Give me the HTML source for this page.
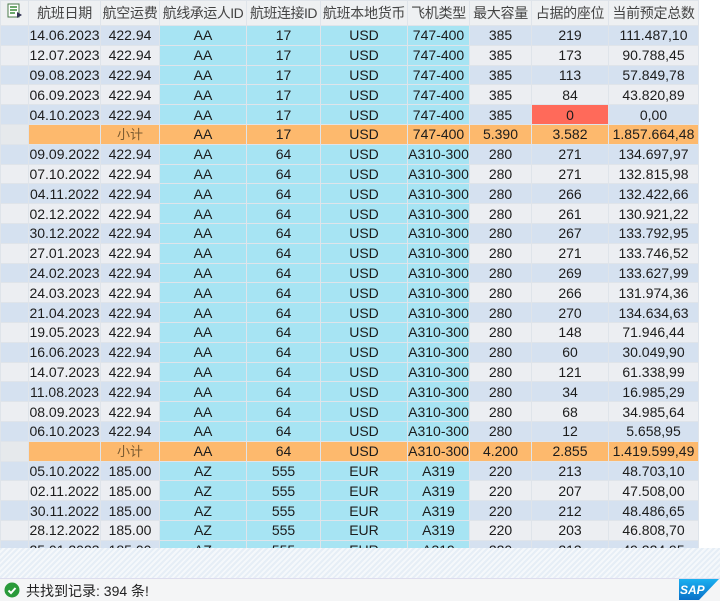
<!DOCTYPE html>
<html><head><meta charset="utf-8"><style>
body{margin:0;width:720px;height:600px;overflow:hidden;background:#f3f4f6;font-family:"Liberation Sans","Noto Sans CJK SC",sans-serif;}
#grid{position:absolute;left:0;top:0;width:720px;height:548px;overflow:hidden;background:#fff;}
table{border-collapse:collapse;table-layout:fixed;width:698px;font-size:14px;color:#1c1c1c;}
td,th{height:18.8px;line-height:18px;padding:0;border:1px solid #dfe4ea;text-align:center;white-space:nowrap;overflow:hidden;}
th{height:24px;font-weight:normal;background:#eef0f2;color:#444;font-size:14px;font-family:"Noto Sans CJK SC",sans-serif;letter-spacing:-0.3px;}
th.id{font-family:"Liberation Sans","Noto Sans CJK SC",sans-serif;letter-spacing:-0.5px;}
td.rh{background:#e6e9ec;}
tr.e td{background:#d5e1f0;}
tr.o td{background:#eceef2;}
tr td.c{background:#a7e4f3;}
tr.s td{background:#fdb96d;}
tr.s td.rh{background:#e6e9ec;}
td.red{background:#ff6a5a!important;}
.sub{color:#7a5a30;font-family:"Noto Sans CJK SC",sans-serif;font-size:13px;}
#hatch{position:absolute;left:0;top:548px;width:720px;height:30px;background:repeating-linear-gradient(135deg,#e6eef6 0 2px,#f5f8fb 2px 4px);}
#status{position:absolute;left:0;top:578px;width:720px;height:22px;background:#f4f5f6;border-top:1px solid #dde;font-size:14px;color:#222;}
</style></head><body>
<div id="grid"><table>
<colgroup><col style="width:28px"><col style="width:72px"><col style="width:59px"><col style="width:87px"><col style="width:74px"><col style="width:87px"><col style="width:62px"><col style="width:62px"><col style="width:77px"><col style="width:90px"></colgroup>
<tr><th><svg width="16" height="16" viewBox="0 0 16 16"><rect x="1" y="1" width="11" height="13" fill="#fff" stroke="#4a7a4a"/><path d="M3 4h7M3 7h7M3 10h5" stroke="#3a8a3a" stroke-width="1.5"/><path d="M10 9l5 3-5 3z" fill="#335"/></svg></th><th>航班日期</th><th>航空运费</th><th class="id">航线承运人ID</th><th class="id">航班连接ID</th><th>航班本地货币</th><th>飞机类型</th><th>最大容量</th><th>占据的座位</th><th>当前预定总数</th></tr>
<tr class="e"><td class="rh"></td><td>14.06.2023</td><td>422.94</td><td class="c">AA</td><td class="c">17</td><td class="c">USD</td><td class="c">747-400</td><td>385</td><td>219</td><td>111.487,10</td></tr>
<tr class="o"><td class="rh"></td><td>12.07.2023</td><td>422.94</td><td class="c">AA</td><td class="c">17</td><td class="c">USD</td><td class="c">747-400</td><td>385</td><td>173</td><td>90.788,45</td></tr>
<tr class="e"><td class="rh"></td><td>09.08.2023</td><td>422.94</td><td class="c">AA</td><td class="c">17</td><td class="c">USD</td><td class="c">747-400</td><td>385</td><td>113</td><td>57.849,78</td></tr>
<tr class="o"><td class="rh"></td><td>06.09.2023</td><td>422.94</td><td class="c">AA</td><td class="c">17</td><td class="c">USD</td><td class="c">747-400</td><td>385</td><td>84</td><td>43.820,89</td></tr>
<tr class="e"><td class="rh"></td><td>04.10.2023</td><td>422.94</td><td class="c">AA</td><td class="c">17</td><td class="c">USD</td><td class="c">747-400</td><td>385</td><td class="red">0</td><td>0,00</td></tr>
<tr class="s"><td class="rh"></td><td></td><td class="sub">小计</td><td>AA</td><td>17</td><td>USD</td><td>747-400</td><td>5.390</td><td>3.582</td><td>1.857.664,48</td></tr>
<tr class="e"><td class="rh"></td><td>09.09.2022</td><td>422.94</td><td class="c">AA</td><td class="c">64</td><td class="c">USD</td><td class="c">A310-300</td><td>280</td><td>271</td><td>134.697,97</td></tr>
<tr class="o"><td class="rh"></td><td>07.10.2022</td><td>422.94</td><td class="c">AA</td><td class="c">64</td><td class="c">USD</td><td class="c">A310-300</td><td>280</td><td>271</td><td>132.815,98</td></tr>
<tr class="e"><td class="rh"></td><td>04.11.2022</td><td>422.94</td><td class="c">AA</td><td class="c">64</td><td class="c">USD</td><td class="c">A310-300</td><td>280</td><td>266</td><td>132.422,66</td></tr>
<tr class="o"><td class="rh"></td><td>02.12.2022</td><td>422.94</td><td class="c">AA</td><td class="c">64</td><td class="c">USD</td><td class="c">A310-300</td><td>280</td><td>261</td><td>130.921,22</td></tr>
<tr class="e"><td class="rh"></td><td>30.12.2022</td><td>422.94</td><td class="c">AA</td><td class="c">64</td><td class="c">USD</td><td class="c">A310-300</td><td>280</td><td>267</td><td>133.792,95</td></tr>
<tr class="o"><td class="rh"></td><td>27.01.2023</td><td>422.94</td><td class="c">AA</td><td class="c">64</td><td class="c">USD</td><td class="c">A310-300</td><td>280</td><td>271</td><td>133.746,52</td></tr>
<tr class="e"><td class="rh"></td><td>24.02.2023</td><td>422.94</td><td class="c">AA</td><td class="c">64</td><td class="c">USD</td><td class="c">A310-300</td><td>280</td><td>269</td><td>133.627,99</td></tr>
<tr class="o"><td class="rh"></td><td>24.03.2023</td><td>422.94</td><td class="c">AA</td><td class="c">64</td><td class="c">USD</td><td class="c">A310-300</td><td>280</td><td>266</td><td>131.974,36</td></tr>
<tr class="e"><td class="rh"></td><td>21.04.2023</td><td>422.94</td><td class="c">AA</td><td class="c">64</td><td class="c">USD</td><td class="c">A310-300</td><td>280</td><td>270</td><td>134.634,63</td></tr>
<tr class="o"><td class="rh"></td><td>19.05.2023</td><td>422.94</td><td class="c">AA</td><td class="c">64</td><td class="c">USD</td><td class="c">A310-300</td><td>280</td><td>148</td><td>71.946,44</td></tr>
<tr class="e"><td class="rh"></td><td>16.06.2023</td><td>422.94</td><td class="c">AA</td><td class="c">64</td><td class="c">USD</td><td class="c">A310-300</td><td>280</td><td>60</td><td>30.049,90</td></tr>
<tr class="o"><td class="rh"></td><td>14.07.2023</td><td>422.94</td><td class="c">AA</td><td class="c">64</td><td class="c">USD</td><td class="c">A310-300</td><td>280</td><td>121</td><td>61.338,99</td></tr>
<tr class="e"><td class="rh"></td><td>11.08.2023</td><td>422.94</td><td class="c">AA</td><td class="c">64</td><td class="c">USD</td><td class="c">A310-300</td><td>280</td><td>34</td><td>16.985,29</td></tr>
<tr class="o"><td class="rh"></td><td>08.09.2023</td><td>422.94</td><td class="c">AA</td><td class="c">64</td><td class="c">USD</td><td class="c">A310-300</td><td>280</td><td>68</td><td>34.985,64</td></tr>
<tr class="e"><td class="rh"></td><td>06.10.2023</td><td>422.94</td><td class="c">AA</td><td class="c">64</td><td class="c">USD</td><td class="c">A310-300</td><td>280</td><td>12</td><td>5.658,95</td></tr>
<tr class="s"><td class="rh"></td><td></td><td class="sub">小计</td><td>AA</td><td>64</td><td>USD</td><td>A310-300</td><td>4.200</td><td>2.855</td><td>1.419.599,49</td></tr>
<tr class="e"><td class="rh"></td><td>05.10.2022</td><td>185.00</td><td class="c">AZ</td><td class="c">555</td><td class="c">EUR</td><td class="c">A319</td><td>220</td><td>213</td><td>48.703,10</td></tr>
<tr class="o"><td class="rh"></td><td>02.11.2022</td><td>185.00</td><td class="c">AZ</td><td class="c">555</td><td class="c">EUR</td><td class="c">A319</td><td>220</td><td>207</td><td>47.508,00</td></tr>
<tr class="e"><td class="rh"></td><td>30.11.2022</td><td>185.00</td><td class="c">AZ</td><td class="c">555</td><td class="c">EUR</td><td class="c">A319</td><td>220</td><td>212</td><td>48.486,65</td></tr>
<tr class="o"><td class="rh"></td><td>28.12.2022</td><td>185.00</td><td class="c">AZ</td><td class="c">555</td><td class="c">EUR</td><td class="c">A319</td><td>220</td><td>203</td><td>46.808,70</td></tr>
<tr class="e"><td class="rh"></td><td>25.01.2023</td><td>185.00</td><td class="c">AZ</td><td class="c">555</td><td class="c">EUR</td><td class="c">A319</td><td>220</td><td>213</td><td>49.224,95</td></tr>
</table></div>
<div id="hatch"></div>
<div id="status">
<svg style="position:absolute;left:4px;top:3px" width="16" height="16" viewBox="0 0 16 16"><circle cx="8" cy="8" r="7.5" fill="#2a9a3a"/><path d="M4.5 8.5l2.5 2.5 4.5-5" stroke="#fff" stroke-width="2" fill="none"/></svg>
<span style="position:absolute;left:26px;top:2px">共找到记录: 394 条!</span>
<svg style="position:absolute;left:679px;top:0px" width="40" height="21" viewBox="0 0 40 21"><defs><linearGradient id="g" x1="0" y1="0" x2="0" y2="1"><stop offset="0" stop-color="#1ab0f0"/><stop offset="1" stop-color="#0a70c8"/></linearGradient></defs><path d="M0 0H40L20 21H0Z" fill="url(#g)"/><text x="1" y="15" fill="#fff" font-family="Liberation Sans" font-weight="bold" font-style="italic" font-size="12">SAP</text></svg>
</div>
</body></html>
